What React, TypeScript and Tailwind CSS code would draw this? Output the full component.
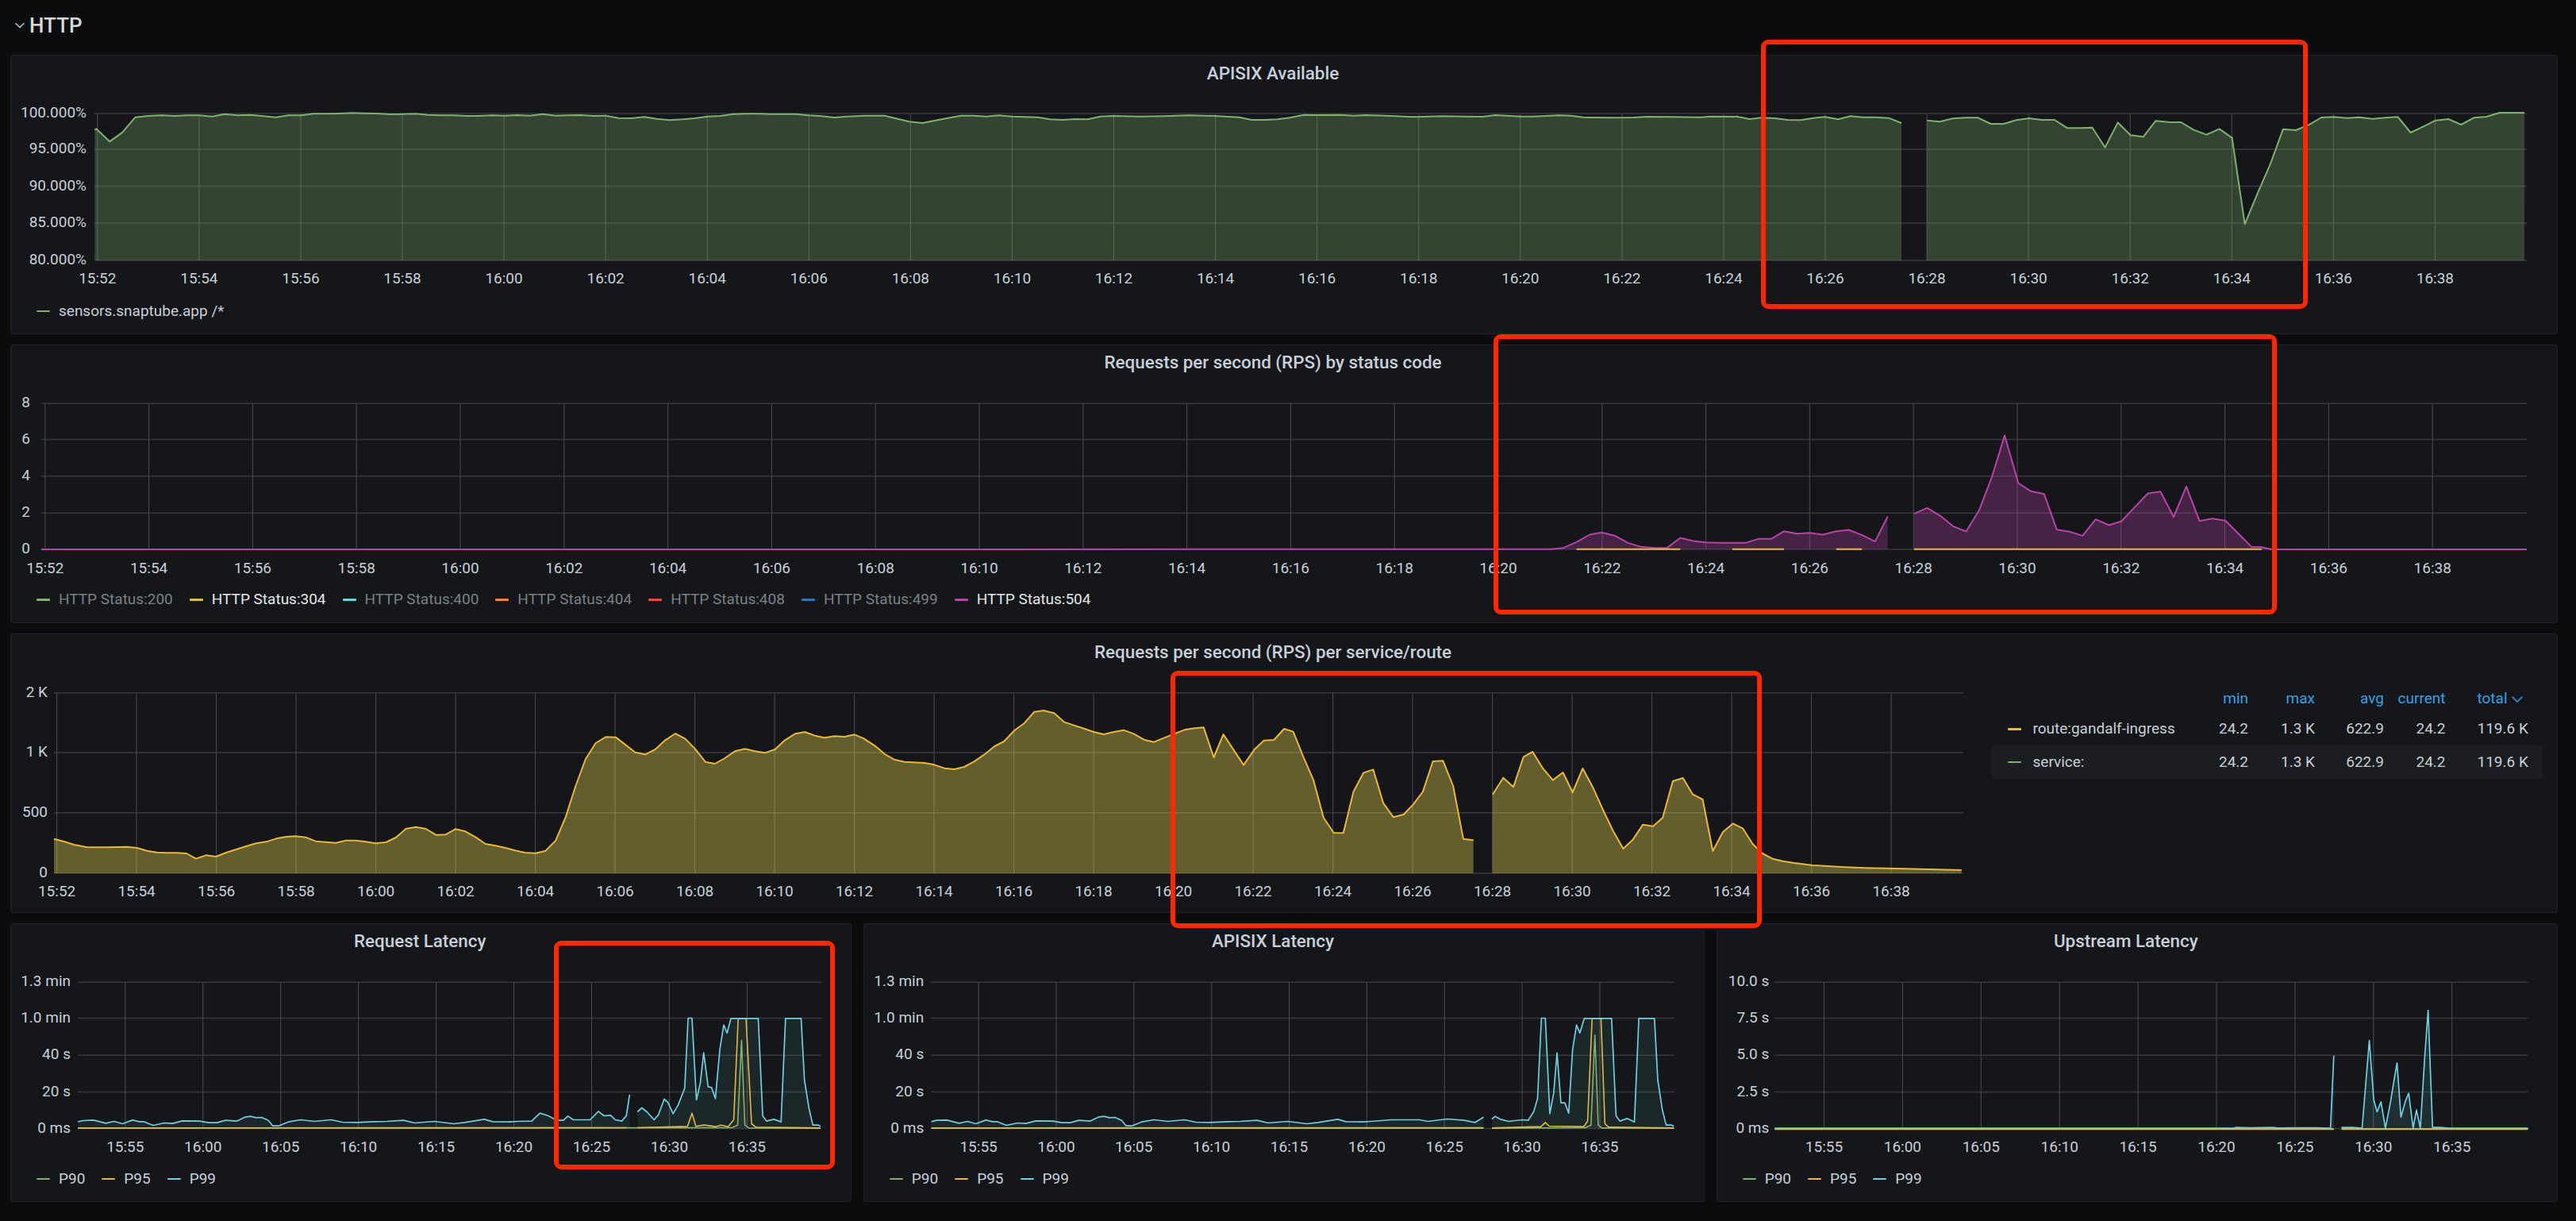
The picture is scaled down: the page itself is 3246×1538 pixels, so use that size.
import React from "react";
import { ChevronDown } from "lucide-react";

type Pt = [number, number];
const seg = (x0: number, sx: number, y0: number, s: string): Pt[] =>
  s.trim().split(/\s+/).map((p) => {
    const [a, b] = p.split(":").map(Number);
    return [x0 + a / sx, y0 + b / 3] as Pt;
  });

const GREEN = "#7EB26D", YELLOW = "#EAB839", CYAN = "#6ED0E0", ORANGE = "#EF843C", RED = "#E24D42", BLUE = "#1F78C1", MAGENTA = "#BA43A9";

type Series = { color: string; fill?: string; fillOpacity?: number; width: number; segs: Pt[][] };
type ChartProps = {
  left: number; top: number; w: number; h: number; base: number; x1: number; x2: number; labelRight: number; labelY: number;
  yTicks: [string, number][]; xTicks: [string, number][]; series: Series[]; className: string;
};

function Chart({ left, top, w, h, base, x1, x2, labelRight, labelY, yTicks, xTicks, series, className }: ChartProps) {
  const gridTop = yTicks[0][1];
  return (
    <svg viewBox={`${left} ${top} ${w} ${h}`} className={className}>
      {yTicks.map(([, y]) => (
        <line key={y} x1={x1} x2={x2} y1={y} y2={y} stroke="#36383b" strokeWidth={1.6} />
      ))}
      {xTicks.map(([l, x]) => (
        <line key={l} x1={x} x2={x} y1={gridTop} y2={base} stroke="#47494d" strokeWidth={1.1} />
      ))}
      {series.map((s, i) => (
        <g key={i}>
          {s.fillOpacity
            ? s.segs.map((pts, j) => (
                <path
                  key={j}
                  d={`M${pts[0][0]} ${base}L${pts.map((p) => p.join(" ")).join("L")}L${pts[pts.length - 1][0]} ${base}Z`}
                  fill={s.fill || s.color}
                  fillOpacity={s.fillOpacity}
                />
              ))
            : null}
          {s.segs.map((pts, j) => (
            <polyline key={j} points={pts.map((p) => p.join(",")).join(" ")} fill="none" stroke={s.color} strokeWidth={s.width} strokeLinejoin="round" />
          ))}
        </g>
      ))}
      {yTicks.map(([l, y]) => (
        <text key={l} x={labelRight} y={y - 1.5} textAnchor="end" dominantBaseline="central" className="fill-[#c7d0d9] text-[19px]">
          {l}
        </text>
      ))}
      {xTicks.map(([l, x]) => (
        <text key={l} x={x} y={labelY} textAnchor="middle" dominantBaseline="central" className="fill-[#c7d0d9] text-[19px]">
          {l}
        </text>
      ))}
    </svg>
  );
}

const times = ["15:52","15:54","15:56","15:58","16:00","16:02","16:04","16:06","16:08","16:10","16:12","16:14","16:16","16:18","16:20","16:22","16:24","16:26","16:28","16:30","16:32","16:34","16:36","16:38"];
const ticks2 = (x0: number, dx: number): [string, number][] => times.map((t, i) => [t, x0 + dx * i]);
const times5 = ["15:55","16:00","16:05","16:10","16:15","16:20","16:25","16:30","16:35"];
const ticks5 = (x0: number, dx: number): [string, number][] => times5.map((t, i) => [t, x0 + dx * i]);

const z1 = 1.4255;
const availSeries: Series[] = [{
  color: GREEN, fillOpacity: 0.3, width: 2,
  segs: [
    [
      ...seg(0, z1, 0, "170:490 173:487 197:535 220:500 243:443 266:438 290:436 313:438 336:436 358:436 381:440 404:431 427:436 450:434 473:439 495:443 518:436 541:436 563:430 586:430 609:429 632:427 655:428 678:429 700:432 723:431 746:430 769:434 792:436 815:436 838:438 860:438 883:436 906:437 929:435 952:437 975:431 998:437 1020:436 1043:435 1066:438 1088:437 1111:446 1134:447 1157:442 1180:449 1203:454 1226:451 1248:447 1271:440 1294:438 1317:431 1340:430 1363:430 1385:431 1408:431 1431:431 1453:436 1476:439 1499:444 1522:440 1552:437"),
      ...seg(1090, z1, 60, "35:257 80:280 103:285 126:275 172:257 195:257 218:260 240:256 263:260 310:263 332:271 355:273 377:270 400:271 423:260 446:258 492:260 537:259 582:256 628:258 672:263 695:273 718:273 741:271 763:265 788:254 810:255 855:254 877:257 900:255 945:258 990:262 1035:259 1080:260 1110:261 1132:255 1178:260 1200:260 1245:256 1268:257 1290:263 1335:265 1380:264 1405:261 1450:262 1500:263 1520:260 1568:261"),
      ...seg(2150, 1.4307, 30, "55:350 78:360 100:355 124:357 147:363 170:364 193:356 214:352 238:361 260:349 283:353 306:353 329:356 352:375"),
    ],
    seg(2150, 1.4307, 30, "398:365 421:370 444:358 467:355 490:355 513:378 536:378 559:364 582:357 605:363 628:363 651:394 674:394 696:392 719:467 742:373 765:421 788:427 810:367 833:371 856:372 879:401 902:419 925:397 948:431 971:757 994:640 1017:530 1040:398 1063:402 1086:382 1109:354 1132:352 1155:356 1178:353 1201:359 1224:355 1247:352 1270:411 1293:388 1315:365 1338:360 1361:381 1384:355 1407:351 1430:336 1475:336"),
  ],
}];

const rpsSeries: Series[] = [
  {
    color: MAGENTA, fillOpacity: 0.3, width: 2,
    segs: [
      [[52, 691.5], ...seg(1850, 1.568, 420, "164:814 188:809 214:787 240:759 264:751 290:763 316:790 342:805 368:809 393:809 419:771 445:783 470:788 496:790 522:790 548:790 573:775 599:775 624:746 650:755 675:752 701:759 727:746 752:741 778:760 804:785 829:690")],
      [...seg(1850, 1.568, 420, "881:680 907:658 933:688 958:727 984:747 1010:665 1035:540 1060:384 1087:564 1112:595 1138:605 1163:740 1189:748 1214:763 1240:701 1266:723 1291:708 1317:655 1343:603 1368:596 1394:692 1419:577 1445:707 1470:698 1496:706 1522:755 1548:805 1568:806"), [2862, 691.5], [3184, 691.5]],
    ],
  },
  {
    color: YELLOW, width: 2,
    segs: [
      seg(1850, 1.568, 420, "214:814 419:814"),
      seg(1850, 1.568, 420, "522:814 624:814"),
      seg(1850, 1.568, 420, "727:814 778:814"),
      seg(1850, 1.568, 420, "881:814 1568:814"),
    ],
  },
];

const reqSeries: Series[] = [{
  color: YELLOW, fill: "#e6d652", fillOpacity: 0.38, width: 2,
  segs: [
    [
      ...seg(0, z1, 790, "97:800 115:810 133:822 155:831 172:832 190:832 228:830 246:834 264:845 282:851 300:853 317:853 335:855 352:875 370:862 388:867 406:852 424:840 442:828 460:817 478:811 496:799 514:792 531:790 549:794 567:809 585:812 603:815 621:806 639:806 657:811 675:817 693:813 711:795 729:762 747:755 765:762 783:785 800:784 818:763 836:772 854:793 872:819 890:826 908:834 925:844 943:852 962:854 980:845 998:807 1016:718 1034:600 1052:498 1070:438 1088:415 1106:416 1124:445 1141:473 1159:481 1177:462 1195:427 1213:402 1231:422 1249:461 1267:509 1284:516 1302:495 1320:469 1338:460 1356:469 1374:475 1392:462 1410:427 1428:403 1446:396 1464:410 1481:418 1499:412 1517:414 1535:406 1553:422"),
      ...seg(1090, 3, 860, "0:214 37:238 75:270 110:290 150:299 225:303 262:310 300:323 337:327 375:318 412:298 450:272 490:240 525:222 565:180 602:153 640:110 675:105 715:115 752:148 790:161 830:174 865:186 903:195 940:186 978:179"),
      ...seg(1400, 1.568, 790, "45:403 65:425 85:434 105:418 125:403 145:388 165:382 183:379 203:492 222:405 242:463 262:521 283:463 302:428 322:426 342:384 360:395 380:490 400:578 420:720 440:777 459:778 479:622 499:550 518:538 538:665 558:718 578:708 597:670 616:622 636:507 656:505 676:600 696:800 716:805"),
    ],
    [
      ...seg(1400, 1.568, 790, "754:632 775:569 795:604 815:490 833:471 853:533 873:578 893:549 912:624 932:534 952:605 972:690 992:770 1012:837 1031:803 1051:746 1071:752 1090:720 1110:582 1130:570 1149:631 1169:651 1189:846 1209:774 1229:742 1248:760 1268:820 1287:855 1307:875 1327:884 1347:890 1387:900 1450:907 1490:910 1568:913"),
      ...seg(2400, 1.853, 790, "133:918"),
    ],
  ],
}];

const fillC = 0.09;
const fillO = 0.04;
const reqLat: Series[] = [
  { color: GREEN, fillOpacity: fillO, width: 1.6, segs: [seg(0, z1, 1150, "140:812 1315:810 1325:800 1332:480 1338:800 1345:811 1474:812")] },
  { color: YELLOW, fillOpacity: fillO, width: 1.6, segs: [seg(0, z1, 1150, "140:811 1125:810"), seg(0, z1, 1150, "1145:810 1235:805 1243:755 1250:805 1258:802 1265:800 1285:806 1295:800 1308:806 1318:780 1326:397 1340:397 1350:795 1358:808 1474:811")] },
  {
    color: CYAN, fillOpacity: fillC, width: 1.7,
    segs: [
      seg(0, z1, 1150, "140:787 150:783 168:781 190:793 205:786 220:795 238:781 250:787 258:787 275:801 295:792 310:794 328:784 358:785 375:791 390:791 405:782 425:785 440:770 450:767 460:772 470:771 482:782 490:803 500:803 518:788 540:780 565:786 595:780 615:789 640:790 672:787 695:786 725:782 745:792 780:786 815:795 835:790 870:778 885:787 915:788 930:786 955:785 970:755 985:765 1000:782 1012:782 1020:766 1030:780 1060:780 1075:748 1085:765 1097:763 1105:780 1117:785 1125:765 1131:685"),
      seg(0, z1, 1150, "1145:750 1153:735 1162:750 1175:780 1183:760 1193:702 1200:715 1209:757 1218:725 1230:660 1236:396 1243:396 1251:705 1258:640 1264:527 1272:655 1278:658 1285:700 1293:515 1300:422 1306:452 1313:397 1362:397 1370:765 1377:785 1390:778 1403:788 1411:397 1439:397 1445:630 1453:735 1460:800 1470:800 1474:805"),
    ],
  },
];

const apiLat: Series[] = [
  { color: GREEN, fillOpacity: fillO, width: 1.6, segs: [seg(1080, z1, 1150, "133:812 1125:812"), seg(1080, z1, 1150, "1140:812 1308:810 1318:800 1325:460 1331:800 1338:811 1467:812")] },
  { color: YELLOW, fillOpacity: fillO, width: 1.6, segs: [seg(1080, z1, 1150, "133:811 1125:810"), seg(1080, z1, 1150, "1140:811 1228:806 1236:790 1243:804 1305:806 1312:785 1320:397 1336:397 1343:795 1350:808 1467:811")] },
  {
    color: CYAN, fillOpacity: fillC, width: 1.7,
    segs: [
      seg(1080, z1, 1150, "133:787 143:782 161:781 183:793 198:786 213:795 231:781 243:787 251:787 268:801 288:792 303:794 321:784 351:785 368:791 383:791 398:782 418:785 433:770 443:767 453:772 463:771 475:782 483:803 493:803 511:788 533:780 558:786 588:780 608:789 633:790 665:787 688:786 718:782 738:792 773:786 808:795 828:790 863:778 878:787 908:788 923:786 960:780 1010:780 1025:786 1060:777 1090:782 1110:790 1125:770"),
      seg(1080, z1, 1150, "1140:777 1146:767 1155:778 1170:786 1195:780 1205:782 1215:750 1222:700 1229:396 1236:396 1244:757 1251:680 1257:527 1264:716 1271:716 1278:755 1285:515 1292:422 1298:452 1306:397 1355:397 1363:765 1370:785 1383:775 1396:788 1404:397 1432:397 1438:630 1446:740 1453:800 1463:800 1467:805"),
    ],
  },
];

const z6 = 1.4307;
const upLat: Series[] = [
  { color: GREEN, width: 1.6, segs: [seg(2150, z6, 1150, "123:815 1131:815"), seg(2150, z6, 1150, "1145:815 1481:815")] },
  { color: YELLOW, width: 2, segs: [seg(2150, z6, 1150, "123:815 1131:815"), seg(2150, z6, 1150, "1145:815 1481:815")] },
  {
    color: CYAN, fillOpacity: 0.13, width: 1.7,
    segs: [
      seg(2150, z6, 1150, "123:812 950:812 955:809 980:810 1020:809 1030:811 1060:810 1100:810 1125:812 1131:538"),
      seg(2150, z6, 1150, "1145:809 1165:809 1182:812 1195:480 1203:705 1209:750 1216:712 1224:812 1233:715 1240:625 1245:565 1252:770 1260:710 1266:680 1274:812 1280:743 1287:812 1295:540 1301:366 1309:809 1322:809 1340:812 1481:812"),
    ],
  },
];

function Title({ children }: { children: React.ReactNode }) {
  return <div className="flex h-[45px] items-center justify-center pr-[28px] text-[22.4px] font-medium text-[#c7d0d9]">{children}</div>;
}

function Legend({ items }: { items: { label: string; color: string; dim?: boolean; bright?: boolean }[] }) {
  return (
    <div className="flex h-[30px] items-center gap-[21px] pl-[32px] text-[19px] whitespace-nowrap">
      {items.map((it) => (
        <div key={it.label} className="flex items-center gap-[11px]">
          <span className="h-[2.5px] w-[17px] rounded-[1px]" style={{ background: it.color }} />
          <span className={it.dim ? "text-[#7b8087]" : it.bright ? "text-[#e4e6e8]" : "text-[#c7d0d9]"}>{it.label}</span>
        </div>
      ))}
    </div>
  );
}

const panelCls = "box-border overflow-hidden rounded-[3px] border border-[#1f2125] bg-[#141619]";
const pLegend = [
  { label: "P90", color: GREEN },
  { label: "P95", color: YELLOW },
  { label: "P99", color: CYAN },
];

function TableRow({ color, name, shaded }: { color: string; name: string; shaded?: boolean }) {
  return (
    <div className={`grid h-[41.7px] grid-cols-[243.5px_80px_84px_87px_77.5px_120.5px] items-center text-[#c7d0d9] ${shaded ? "bg-[#1b1d20]" : ""}`}>
      <div className="flex items-center gap-[15px] pl-[20px]">
        <span className="h-[2.5px] w-[17px] rounded-[1px]" style={{ background: color }} />
        <span>{name}</span>
      </div>
      <div className="text-right">24.2</div>
      <div className="text-right">1.3 K</div>
      <div className="text-right">622.9</div>
      <div className="text-right">24.2</div>
      <div className="pl-[40px]">119.6 K</div>
    </div>
  );
}

function Mark({ className }: { className: string }) {
  return <div className={`absolute box-border rounded-[9px] border-[6px] border-[#ff2600] ${className}`} />;
}

export default function App() {
  return (
    <div className="relative h-[1538px] w-[3246px] overflow-hidden bg-[#0b0c0e] font-[Roboto,sans-serif]">
      <div className="flex h-[69px] items-center pb-[5px] pl-[15px]">
        <ChevronDown size={20} strokeWidth={1.5} className="text-[#c7d0d9]" />
        <span className="ml-[2px] text-[26px] font-medium text-[#d8d9da]">HTTP</span>
      </div>

      <div className="ml-[13px] flex w-[3210px] flex-col gap-[13px]">
        <section className={`${panelCls} h-[351.5px]`}>
          <Title>APISIX Available</Title>
          <Chart
            className="block h-[262px] w-[3208px]"
            left={14} top={115} w={3208} h={262} base={328} x1={119} x2={3184} labelRight={109} labelY={350}
            yTicks={[["100.000%", 143], ["95.000%", 188], ["90.000%", 234.5], ["85.000%", 281], ["80.000%", 328]]}
            xTicks={ticks2(122.8, 128.07)}
            series={availSeries}
          />
          <Legend items={[{ label: "sensors.snaptube.app /*", color: GREEN }]} />
        </section>

        <section className={`${panelCls} h-[351.5px]`}>
          <Title>Requests per second (RPS) by status code</Title>
          <Chart
            className="block h-[261px] w-[3208px]"
            left={14} top={479.5} w={3208} h={261} base={691.5} x1={52} x2={3184} labelRight={38} labelY={715}
            yTicks={[["8", 507.7], ["6", 553], ["4", 599.3], ["2", 645.7], ["0", 691.5]]}
            xTicks={ticks2(56.8, 130.8)}
            series={rpsSeries}
          />
          <Legend
            items={[
              { label: "HTTP Status:200", color: GREEN, dim: true },
              { label: "HTTP Status:304", color: YELLOW, bright: true },
              { label: "HTTP Status:400", color: CYAN, dim: true },
              { label: "HTTP Status:404", color: ORANGE, dim: true },
              { label: "HTTP Status:408", color: RED, dim: true },
              { label: "HTTP Status:499", color: BLUE, dim: true },
              { label: "HTTP Status:504", color: MAGENTA, bright: true },
            ]}
          />
        </section>

        <section className={`${panelCls} h-[351.5px]`}>
          <Title>Requests per second (RPS) per service/route</Title>
          <div className="flex">
            <Chart
              className="block h-[304px] w-[2490px] shrink-0"
              left={14} top={844} w={2490} h={304} base={1100} x1={68} x2={2474} labelRight={60} labelY={1122.7}
              yTicks={[["2 K", 872.7], ["1 K", 948], ["500", 1023.7], ["0", 1100]]}
              xTicks={ticks2(71.6, 100.5)}
              series={reqSeries}
            />
            <div className="w-[699px] pl-[5.5px] pt-[16.5px] text-[19px]">
              <div className="grid h-[37px] grid-cols-[243.5px_80px_84px_87px_77.5px_120.5px] items-center pt-[3px] text-[#33a2e5]">
                <div />
                <div className="text-right">min</div>
                <div className="text-right">max</div>
                <div className="text-right">avg</div>
                <div className="text-right">current</div>
                <div className="flex items-center pl-[40px]">
                  total
                  <ChevronDown size={24} strokeWidth={1.5} />
                </div>
              </div>
              <TableRow color={YELLOW} name="route:gandalf-ingress" />
              <TableRow color={GREEN} name="service:" shaded />
            </div>
          </div>
        </section>

        <div className="grid grid-cols-3 gap-[14.5px]">
          <section className={`${panelCls} h-[351.5px]`}>
            <Title>Request Latency</Title>
            <Chart
              className="block h-[261.5px] w-[1058px]"
              left={14} top={1208.5} w={1058} h={261.5} base={1421} x1={98} x2={1034.7} labelRight={89} labelY={1443.7}
              yTicks={[["1.3 min", 1236.7], ["1.0 min", 1282], ["40 s", 1328.7], ["20 s", 1375], ["0 ms", 1421]]}
              xTicks={ticks5(157.8, 97.95)}
              series={reqLat}
            />
            <Legend items={pLegend} />
          </section>
          <section className={`${panelCls} h-[351.5px]`}>
            <Title>APISIX Latency</Title>
            <Chart
              className="block h-[261.5px] w-[1058px]"
              left={1088.8} top={1208.5} w={1058} h={261.5} base={1421} x1={1173.3} x2={2109.8} labelRight={1164} labelY={1443.7}
              yTicks={[["1.3 min", 1236.7], ["1.0 min", 1282], ["40 s", 1328.7], ["20 s", 1375], ["0 ms", 1421]]}
              xTicks={ticks5(1232.9, 97.85)}
              series={apiLat}
            />
            <Legend items={pLegend} />
          </section>
          <section className={`${panelCls} h-[351.5px]`}>
            <Title>Upstream Latency</Title>
            <Chart
              className="block h-[261.5px] w-[1058px]"
              left={2163.7} top={1208.5} w={1058} h={261.5} base={1421} x1={2236} x2={3185} labelRight={2229} labelY={1443.7}
              yTicks={[["10.0 s", 1236.7], ["7.5 s", 1282], ["5.0 s", 1328.7], ["2.5 s", 1375], ["0 ms", 1421]]}
              xTicks={ticks5(2298.2, 98.9)}
              series={upLat}
            />
            <Legend items={pLegend} />
          </section>
        </div>
      </div>

      <Mark className="left-[2218.5px] top-[50px] h-[339px] w-[689px]" />
      <Mark className="left-[1882px] top-[421px] h-[353px] w-[987px]" />
      <Mark className="left-[1475px] top-[845px] h-[324px] w-[745px]" />
      <Mark className="left-[698px] top-[1185px] h-[288px] w-[354px]" />
    </div>
  );
}
